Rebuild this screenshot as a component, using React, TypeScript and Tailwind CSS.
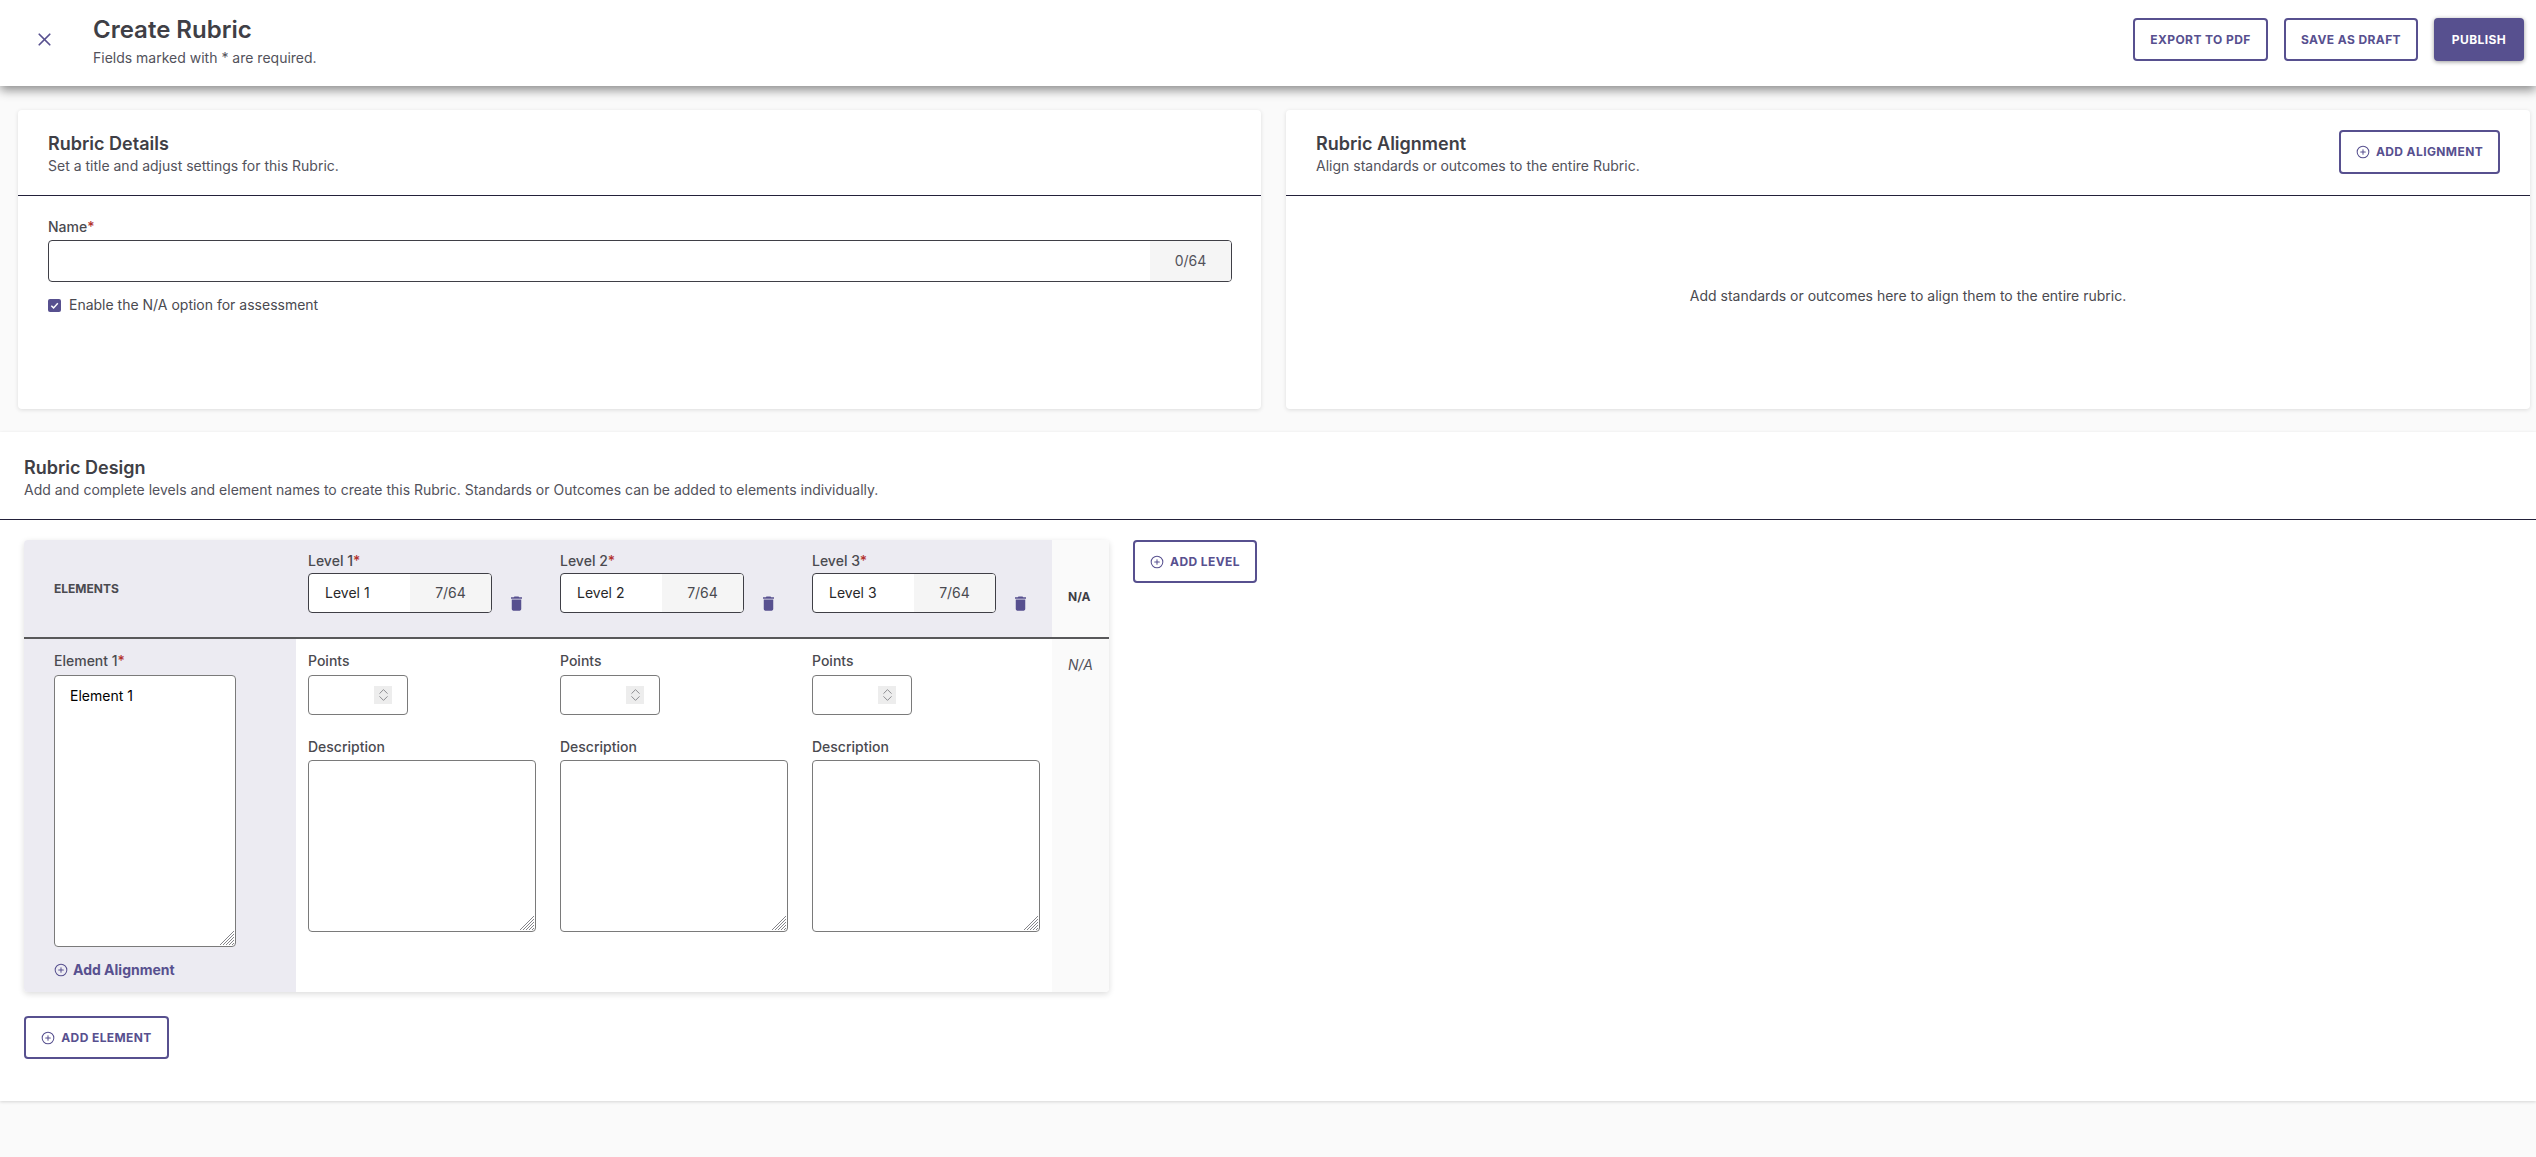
import { ChevronDown, ChevronUp, CirclePlus, X } from 'lucide-react'

function TrashIcon() {
  return (
    <svg viewBox="0 0 24 24" className="w-[19px] h-[19px] fill-[#57508f]">
      <path d="M6 19c0 1.1.9 2 2 2h8c1.1 0 2-.9 2-2V7H6v12zM19 4h-3.5l-1-1h-5l-1 1H5v2h14V4z" />
    </svg>
  )
}

function Required({ label }: { label: string }) {
  return (
    <div className="h-5 text-sm leading-5 font-medium text-[#4a4a50]">
      {label}
      <span className="text-[#b3322e]">*</span>
    </div>
  )
}

function OutlineButton({ label, icon, className }: { label: string; icon?: boolean; className: string }) {
  return (
    <button className={`flex items-center justify-center gap-[6px] rounded-[4px] border-2 border-[#57508f] bg-white text-xs font-bold tracking-[0.4px] text-[#57508f] ${className}`}>
      {icon && <CirclePlus size={14} strokeWidth={1.75} />}
      {label}
    </button>
  )
}

// textarea with the hatched corner grip
function Area({ className, value, pad }: { className: string; value?: string; pad?: boolean }) {
  return (
    <div className={`relative ${className}`}>
      <textarea
        className={`block h-full w-full resize-none rounded-[4px] border border-[#7a7a7a] bg-white ${pad ? 'px-[15px] py-[10px] text-sm text-black' : ''}`}
        defaultValue={value}
      />
      <svg viewBox="0 0 14 14" className="absolute bottom-[2px] right-[2px] h-[14px] w-[14px] stroke-[#85858a] stroke-1">
        <path d="M14 0 0 14M14 3 3 14M14 6 6 14M14 9 9 14M14 12 12 14" />
      </svg>
    </div>
  )
}

function LevelHead({ n }: { n: number }) {
  return (
    <div className="pl-3 pt-[11px]">
      <Required label={`Level ${n}`} />
      <div className="mt-[2px] flex items-start">
        <div className="flex h-10 w-[184px] overflow-hidden rounded-[4px] border border-[#3f3f46] bg-white text-sm">
          <div className="flex flex-1 items-center pl-4 text-[#27272a]">Level {n}</div>
          <div className="flex w-[81px] items-center justify-center bg-[#f5f5f5] text-[#4a4a50]">7/64</div>
        </div>
        <div className="ml-[15px] mt-[21px]">
          <TrashIcon />
        </div>
      </div>
    </div>
  )
}

function LevelBody() {
  return (
    <div className="pl-3 pt-3">
      <div className="h-5 text-sm leading-5 font-medium text-[#4a4a50]">Points</div>
      <div className="mt-1 flex h-10 w-[100px] items-center justify-end rounded-[4px] border border-[#7a7a7a] bg-white pr-[15px]">
        <div className="flex h-[18px] w-[18px] flex-col items-center justify-center bg-[#ededed] text-[#85858a]">
          <ChevronUp size={15} strokeWidth={1.5} className="-mb-[4px] shrink-0" />
          <ChevronDown size={15} strokeWidth={1.5} className="-mt-[4px] shrink-0" />
        </div>
      </div>
      <div className="mt-[22px] h-5 text-sm leading-5 font-medium text-[#4a4a50]">Description</div>
      <Area className="mt-[3px] h-[172px] w-[228px]" />
    </div>
  )
}

export default function App() {
  return (
    <div className="flex h-screen flex-col overflow-hidden bg-[#fafafa] font-[Inter,sans-serif]">
      <header className="relative z-10 flex h-[86px] shrink-0 items-start justify-between bg-white pl-[38px] pr-3 pt-[18px] shadow-[0_4px_10px_rgba(0,0,0,0.45)]">
        <div className="flex items-start">
          <X size={21} strokeWidth={2} className="-ml-[4px] mt-[11px] text-[#57508f]" />
          <div className="-mt-[1px] ml-[38px]">
            <h1 className="text-2xl leading-[26px] font-semibold text-[#3f3f46]">Create Rubric</h1>
            <p className="mt-[5px] text-sm leading-5 text-[#52525b]">Fields marked with * are required.</p>
          </div>
        </div>
        <div className="flex gap-4">
          <OutlineButton label="EXPORT TO PDF" className="h-[43px] w-[135px]" />
          <OutlineButton label="SAVE AS DRAFT" className="h-[43px] w-[134px]" />
          <button className="h-[43px] w-[90px] rounded-[4px] bg-[#57508f] text-xs font-bold tracking-[0.4px] text-white shadow-[0_1px_4px_rgba(0,0,0,0.4)]">
            PUBLISH
          </button>
        </div>
      </header>

      <section className="grid shrink-0 grid-cols-[1243px_1244px] gap-[25px] pl-[18px] pt-6">
        <div className="h-[299px] rounded-[4px] bg-white shadow-[0_1px_4px_rgba(0,0,0,0.12)]">
          <div className="h-[86px] border-b border-[#23213a] pl-[30px] pt-[22px]">
            <h2 className="text-lg leading-6 font-semibold text-[#3f3f46]">Rubric Details</h2>
            <p className="text-sm leading-5 text-[#52525b]">Set a title and adjust settings for this Rubric.</p>
          </div>
          <div className="pl-[30px] pt-[21px]">
            <Required label="Name" />
            <div className="mt-[3px] flex h-[42px] w-[1184px] overflow-hidden rounded-[4px] border border-[#3f3f46]">
              <div className="flex-1" />
              <div className="flex w-[81px] items-center justify-center bg-[#f5f5f5] text-sm text-[#52525b]">0/64</div>
            </div>
            <label className="mt-[13px] flex items-center gap-2 text-sm text-[#4a4a50]">
              <span className="flex h-[13px] w-[13px] items-center justify-center rounded-[2px] bg-[#57508f]">
                <svg viewBox="0 0 12 12" className="h-[11px] w-[11px] fill-none stroke-white stroke-[1.6]">
                  <path d="M2.5 6.2 5 8.6l4.6-5" />
                </svg>
              </span>
              Enable the N/A option for assessment
            </label>
          </div>
        </div>

        <div className="flex h-[299px] flex-col rounded-[4px] bg-white shadow-[0_1px_4px_rgba(0,0,0,0.12)]">
          <div className="flex h-[86px] shrink-0 justify-between border-b border-[#23213a] pl-[30px] pr-[30px]">
            <div className="pt-[22px]">
              <h2 className="text-lg leading-6 font-semibold text-[#3f3f46]">Rubric Alignment</h2>
              <p className="text-sm leading-5 text-[#52525b]">Align standards or outcomes to the entire Rubric.</p>
            </div>
            <OutlineButton label="ADD ALIGNMENT" icon className="mt-5 h-11 w-[161px]" />
          </div>
          <p className="pt-[90px] text-center text-sm leading-5 text-[#4a4a50]">
            Add standards or outcomes here to align them to the entire rubric.
          </p>
        </div>
      </section>

      <section className="mt-[23px] h-[669px] shrink-0 bg-white shadow-[0_1px_3px_rgba(0,0,0,0.15)]">
        <div className="h-[88px] border-b border-[#23213a] pl-6 pt-6">
          <h2 className="text-lg leading-6 font-semibold text-[#3f3f46]">Rubric Design</h2>
          <p className="text-sm leading-5 text-[#52525b]">
            Add and complete levels and element names to create this Rubric. Standards or Outcomes can be added to elements individually.
          </p>
        </div>

        <div className="pl-6 pt-5">
          <div className="flex items-start gap-6">
            <div className="grid w-[1085px] grid-cols-[272px_252px_252px_252px_57px] grid-rows-[99px_353px] overflow-hidden rounded-[4px] shadow-[0_2px_6px_rgba(0,0,0,0.14)]">
              <div className="flex items-center border-b-2 border-[#58585a] bg-[#ecebf2] pl-[30px] text-xs font-bold text-[#4a4a50]">
                ELEMENTS
              </div>
              {[1, 2, 3].map((n) => (
                <div key={n} className="border-b-2 border-[#58585a] bg-[#ecebf2]">
                  <LevelHead n={n} />
                </div>
              ))}
              <div className="border-b-2 border-[#58585a] bg-[#fafafa] pl-4 pt-[47px] text-xs leading-5 font-bold text-[#3f3f46]">N/A</div>

              <div className="bg-[#ecebf2] pl-[30px] pt-3">
                <Required label="Element 1" />
                <Area className="mt-1 h-[272px] w-[182px]" value="Element 1" pad />
                <div className="mt-[13px] flex h-5 items-center gap-[5px] text-sm font-bold text-[#57508f]">
                  <CirclePlus size={14} strokeWidth={1.75} />
                  Add Alignment
                </div>
              </div>
              <LevelBody />
              <LevelBody />
              <LevelBody />
              <div className="bg-[#fafafa] pl-4 pt-[16px] text-sm leading-5 text-[#52525b] italic">N/A</div>
            </div>
            <OutlineButton label="ADD LEVEL" icon className="h-[43px] w-[124px]" />
          </div>
          <OutlineButton label="ADD ELEMENT" icon className="mt-6 h-[43px] w-[145px]" />
        </div>
      </section>
    </div>
  )
}
